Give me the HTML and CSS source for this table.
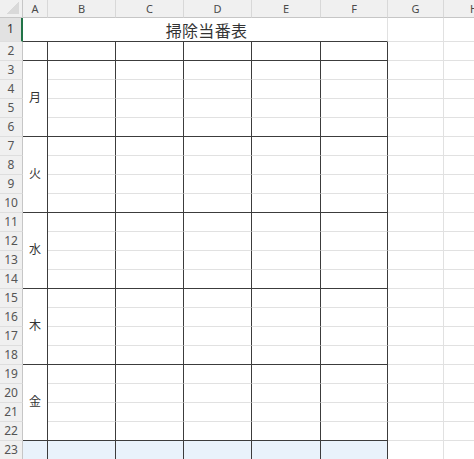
FILE: index.html
```html
<!DOCTYPE html>
<html lang="ja">
<head>
<meta charset="utf-8">
<title>掃除当番表</title>
<link rel="stylesheet" href="styles.css">
</head>
<body>
<table class="sheet">
  <colgroup>
    <col class="c-rh"><col class="c-a"><col class="c-b"><col class="c-c"><col class="c-d"><col class="c-e"><col class="c-f"><col class="c-g"><col class="c-h">
  </colgroup>
  <thead>
    <tr class="hdr">
      <th class="corner"></th><th>A</th><th>B</th><th>C</th><th>D</th><th>E</th><th>F</th><th>G</th><th>H</th>
    </tr>
  </thead>
  <tbody>
    <tr class="r1">
      <th class="rh sel">1</th>
      <td class="title db" colspan="6">掃除当番表</td>
      <td class="g"></td><td class="g"></td>
    </tr>
    <tr>
      <th class="rh">2</th>
      <td class="dr db"></td><td class="dr db"></td><td class="dr db"></td><td class="dr db"></td><td class="dr db"></td><td class="dr db"></td>
      <td class="g"></td><td class="g"></td>
    </tr>
    <!-- 月 -->
    <tr><th class="rh">3</th><td class="day dr db" rowspan="4">月</td><td class="dr"></td><td class="dr"></td><td class="dr"></td><td class="dr"></td><td class="dr"></td><td class="g"></td><td class="g"></td></tr>
    <tr><th class="rh">4</th><td class="dr"></td><td class="dr"></td><td class="dr"></td><td class="dr"></td><td class="dr"></td><td class="g"></td><td class="g"></td></tr>
    <tr><th class="rh">5</th><td class="dr"></td><td class="dr"></td><td class="dr"></td><td class="dr"></td><td class="dr"></td><td class="g"></td><td class="g"></td></tr>
    <tr><th class="rh">6</th><td class="dr db"></td><td class="dr db"></td><td class="dr db"></td><td class="dr db"></td><td class="dr db"></td><td class="g"></td><td class="g"></td></tr>
    <!-- 火 -->
    <tr><th class="rh">7</th><td class="day dr db" rowspan="4">火</td><td class="dr"></td><td class="dr"></td><td class="dr"></td><td class="dr"></td><td class="dr"></td><td class="g"></td><td class="g"></td></tr>
    <tr><th class="rh">8</th><td class="dr"></td><td class="dr"></td><td class="dr"></td><td class="dr"></td><td class="dr"></td><td class="g"></td><td class="g"></td></tr>
    <tr><th class="rh">9</th><td class="dr"></td><td class="dr"></td><td class="dr"></td><td class="dr"></td><td class="dr"></td><td class="g"></td><td class="g"></td></tr>
    <tr><th class="rh">10</th><td class="dr db"></td><td class="dr db"></td><td class="dr db"></td><td class="dr db"></td><td class="dr db"></td><td class="g"></td><td class="g"></td></tr>
    <!-- 水 -->
    <tr><th class="rh">11</th><td class="day dr db" rowspan="4">水</td><td class="dr"></td><td class="dr"></td><td class="dr"></td><td class="dr"></td><td class="dr"></td><td class="g"></td><td class="g"></td></tr>
    <tr><th class="rh">12</th><td class="dr"></td><td class="dr"></td><td class="dr"></td><td class="dr"></td><td class="dr"></td><td class="g"></td><td class="g"></td></tr>
    <tr><th class="rh">13</th><td class="dr"></td><td class="dr"></td><td class="dr"></td><td class="dr"></td><td class="dr"></td><td class="g"></td><td class="g"></td></tr>
    <tr><th class="rh">14</th><td class="dr db"></td><td class="dr db"></td><td class="dr db"></td><td class="dr db"></td><td class="dr db"></td><td class="g"></td><td class="g"></td></tr>
    <!-- 木 -->
    <tr><th class="rh">15</th><td class="day dr db" rowspan="4">木</td><td class="dr"></td><td class="dr"></td><td class="dr"></td><td class="dr"></td><td class="dr"></td><td class="g"></td><td class="g"></td></tr>
    <tr><th class="rh">16</th><td class="dr"></td><td class="dr"></td><td class="dr"></td><td class="dr"></td><td class="dr"></td><td class="g"></td><td class="g"></td></tr>
    <tr><th class="rh">17</th><td class="dr"></td><td class="dr"></td><td class="dr"></td><td class="dr"></td><td class="dr"></td><td class="g"></td><td class="g"></td></tr>
    <tr><th class="rh">18</th><td class="dr db"></td><td class="dr db"></td><td class="dr db"></td><td class="dr db"></td><td class="dr db"></td><td class="g"></td><td class="g"></td></tr>
    <!-- 金 -->
    <tr><th class="rh">19</th><td class="day dr db" rowspan="4">金</td><td class="dr"></td><td class="dr"></td><td class="dr"></td><td class="dr"></td><td class="dr"></td><td class="g"></td><td class="g"></td></tr>
    <tr><th class="rh">20</th><td class="dr"></td><td class="dr"></td><td class="dr"></td><td class="dr"></td><td class="dr"></td><td class="g"></td><td class="g"></td></tr>
    <tr><th class="rh">21</th><td class="dr"></td><td class="dr"></td><td class="dr"></td><td class="dr"></td><td class="dr"></td><td class="g"></td><td class="g"></td></tr>
    <tr><th class="rh">22</th><td class="dr db"></td><td class="dr db"></td><td class="dr db"></td><td class="dr db"></td><td class="dr db"></td><td class="g"></td><td class="g"></td></tr>
    <!-- 23 -->
    <tr><th class="rh">23</th><td class="dr fill"></td><td class="dr fill"></td><td class="dr fill"></td><td class="dr fill"></td><td class="dr fill"></td><td class="dr fill"></td><td class="g"></td><td class="g"></td></tr>
  </tbody>
</table>
</body>
</html>
```

FILE: styles.css
```css
html, body {
  margin: 0;
  padding: 0;
  background: #ffffff;
  overflow: hidden;
}

body {
  width: 474px;
  height: 459px;
}

.sheet {
  border-collapse: separate;
  border-spacing: 0;
  table-layout: fixed;
  width: 505px;
  font-family: "Noto Sans CJK JP", "Noto Sans", sans-serif;
}

.c-rh { width: 23px; }
.c-a { width: 25px; }
.c-b { width: 68px; }
.c-c { width: 68px; }
.c-d { width: 68px; }
.c-e { width: 69px; }
.c-f { width: 67px; }
.c-g { width: 56px; }
.c-h { width: 61px; }

th, td {
  box-sizing: border-box;
  padding: 0;
  margin: 0;
  overflow: hidden;
  white-space: nowrap;
}

tr { height: 19px; }
.hdr { height: 18px; }
.r1 { height: 24px; }

.hdr th {
  background: #f0f0f0;
  border-right: 1px solid #d8d8d8;
  border-bottom: 1px solid #c6c6c6;
  font-family: "Noto Sans", "Liberation Sans", sans-serif;
  font-weight: normal;
  font-size: 11px;
  color: #4a4a4a;
  text-align: center;
  line-height: 16px;
}

.hdr th.corner {
  border-right-color: #c6c6c6;
  background-color: #f0f0f0;
  background-image: linear-gradient(135deg, transparent 50%, #d9d9d9 50%);
  background-repeat: no-repeat;
  background-size: 12px 12px;
  background-position: right 3px bottom 3px;
}

.rh {
  background: #f0f0f0;
  border-right: 1px solid #c6c6c6;
  border-bottom: 1px solid #dedede;
  font-family: "Noto Sans", "Liberation Sans", sans-serif;
  font-weight: normal;
  font-size: 12px;
  color: #555555;
  text-align: center;
  line-height: 16px;
}

.rh.sel {
  background: #e2e2e2;
  border-right: 2px solid #217346;
  color: #333333;
  padding-bottom: 2px;
}

td {
  border-right: 1px solid #e1e1e1;
  border-bottom: 1px solid #e1e1e1;
}

.g {
  border-right: 1px solid #e1e1e1;
  border-bottom: 1px solid #e1e1e1;
}

td.dr { border-right: 1px solid #3c3c3c; }
td.db { border-bottom: 1px solid #3c3c3c; }

td.title {
  font-size: 16px;
  color: #333333;
  text-align: center;
  vertical-align: middle;
  letter-spacing: 0.3px;
  padding-left: 3px;
  line-height: 22px;
  overflow: visible;
}

.day {
  font-size: 12px;
  color: #333333;
  text-align: center;
  vertical-align: middle;
  padding-bottom: 5px;
}

.fill {
  background: #e9f2fb;
}
```
